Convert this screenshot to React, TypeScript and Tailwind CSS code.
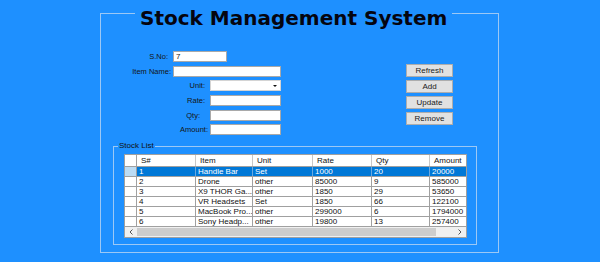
import React from "react";

const rows = [
  ["1", "Handle Bar", "Set", "1000", "20", "20000"],
  ["2", "Drone", "other", "85000", "9", "585000"],
  ["3", "X9 THOR Ga...", "other", "1850", "29", "53650"],
  ["4", "VR Headsets", "Set", "1850", "66", "122100"],
  ["5", "MacBook Pro...", "other", "299000", "6", "1794000"],
  ["6", "Sony Headp...", "other", "19800", "13", "257400"],
];

const cols = [
  { name: "S#", w: "w-[59px]" },
  { name: "Item", w: "w-[57px]" },
  { name: "Unit", w: "w-[60px]" },
  { name: "Rate", w: "w-[59px]" },
  { name: "Qty", w: "w-[58px]" },
  { name: "Amount", w: "w-[60px]" },
];

const font = { fontFamily: '"Liberation Sans", Arial, sans-serif' };

function Field({ label, lw, gap, iw, value }: { label: string; lw: string; gap: string; iw: string; value?: string }) {
  return (
    <div className="flex items-center h-[11px]">
      <span className={`${lw} shrink-0 whitespace-nowrap text-right text-[7.5px] leading-[11px] text-[#141414]`}>{label}</span>
      <div className={`${gap} ${iw} shrink-0 h-[11px] bg-white border border-[#a9a9a9] text-[8px] leading-[9px] pl-[2px] text-[#222]`}>
        {value}
      </div>
    </div>
  );
}

function Btn({ children }: { children: React.ReactNode }) {
  return (
    <div className="w-[47px] h-[13px] bg-[#e1e1e1] border border-[#adadad] flex items-center justify-center text-[8px] leading-none text-[#1a1a1a]">
      {children}
    </div>
  );
}

export default function App() {
  return (
    <div className="w-[600px] h-[262px] bg-[#1e90ff] overflow-hidden pl-[100px]" style={font}>
      <fieldset className="w-[399px] h-[253px] border border-[#9cc8f5]">
        <legend
          className="ml-[34px] px-[5px] pt-[11px] leading-[15px] text-[20px] font-bold text-[#05050f]"
          style={{ fontFamily: '"DejaVu Sans", sans-serif' }}
        >
          Stock Management System
        </legend>

        <div className="flex mt-[25px]">
          <div className="w-[305px] flex flex-col">
            <Field label="S.No:" lw="w-[67px]" gap="ml-[5px]" iw="w-[54px]" value="7" />
            <div className="mt-[4px]">
              <Field label="Item Name:" lw="w-[70px]" gap="ml-[2px]" iw="w-[108px]" />
            </div>
            <div className="mt-[3px] flex items-center h-[11px]">
              <span className="w-[104px] shrink-0 text-right text-[7.5px] leading-[11px] text-[#141414]">Unit:</span>
              <div className="ml-[5px] w-[71px] shrink-0 h-[11px] bg-white border border-[#d4d4d4] flex justify-end items-center pr-[3px]">
                <svg width="4" height="2" viewBox="0 0 4 2">
                  <path d="M0 0H4L2 2Z" fill="#111" />
                </svg>
              </div>
            </div>
            <div className="mt-[4px]">
              <Field label="Rate:" lw="w-[104px]" gap="ml-[5px]" iw="w-[71px]" />
            </div>
            <div className="mt-[4px]">
              <Field label="Qty:" lw="w-[99px]" gap="ml-[10px]" iw="w-[71px]" />
            </div>
            <div className="mt-[3px]">
              <Field label="Amount:" lw="w-[107px]" gap="ml-[2px]" iw="w-[71px]" />
            </div>
          </div>
          <div className="mt-[13px] flex flex-col gap-[3px]">
            <Btn>Refresh</Btn>
            <Btn>Add</Btn>
            <Btn>Update</Btn>
            <Btn>Remove</Btn>
          </div>
        </div>

        <fieldset className="mt-[6px] ml-[12px] w-[364px] h-[104px] border border-[#9cc8f5]">
          <legend className="ml-[4px] px-[1px] text-[8px] leading-[10px] text-[#111]">Stock List</legend>

          <div className="mt-[3px] ml-[10px] w-[343px] h-[84px] border border-[#a0a0a0] bg-white flex flex-col overflow-hidden">
            <div className="flex h-[12px] shrink-0 border-b border-[#a0a0a0]">
              <div className="w-[12px] shrink-0 border-r border-[#a0a0a0]" />
              {cols.map((c) => (
                <div
                  key={c.name}
                  className={`${c.w} shrink-0 border-r border-[#c8c8c8] pl-[4px] text-[8px] leading-[11px] text-[#111]`}
                >
                  {c.name}
                </div>
              ))}
            </div>
            {rows.map((r, i) => {
              const sel = i === 0;
              return (
                <div key={r[0]} className="flex h-[10px] shrink-0 border-b border-[#a0a0a0]">
                  <div
                    className={`w-[12px] shrink-0 border-r border-[#a0a0a0] ${sel ? "bg-[#bcdcf4]" : "bg-white"}`}
                  />
                  {r.map((v, j) => (
                    <div
                      key={j}
                      className={`${cols[j].w} shrink-0 border-r pl-[2px] text-[8px] leading-[9px] whitespace-nowrap overflow-hidden ${
                        sel ? "bg-[#0078d7] text-white border-[#6aa9e0]" : "text-[#111] border-[#a0a0a0]"
                      }`}
                    >
                      {v}
                    </div>
                  ))}
                </div>
              );
            })}
            <div className="flex h-[10px] shrink-0 bg-[#f0f0f0]">
              <div className="w-[12px] flex items-center justify-center">
                <svg width="4" height="6" viewBox="0 0 4 6">
                  <path d="M3.5 0.5L1 3L3.5 5.5" stroke="#555" strokeWidth="1" fill="none" />
                </svg>
              </div>
              <div className="w-[299px] bg-[#cdcdcd] my-[1px]" />
              <div className="flex-1 flex items-center justify-end pr-[4px]">
                <svg width="4" height="6" viewBox="0 0 4 6">
                  <path d="M0.5 0.5L3 3L0.5 5.5" stroke="#555" strokeWidth="1" fill="none" />
                </svg>
              </div>
            </div>
          </div>
        </fieldset>
      </fieldset>
    </div>
  );
}
